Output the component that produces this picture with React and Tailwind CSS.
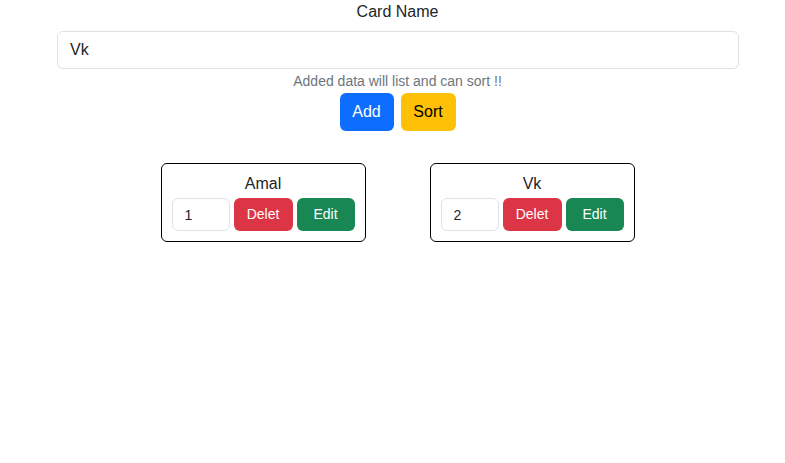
import { useState } from "react"

const CARDS = [
  { name: "Amal", num: "1" },
  { name: "Vk", num: "2" },
]

function Card({ name, num }) {
  return (
    <div className="w-[205px] h-[79px] border border-black rounded-[6px] pt-[8px] px-[10px] flex flex-col items-center">
      <p className="text-[16px] leading-[24px] text-[#212529]">{name}</p>
      <div className="mt-[2px] flex gap-[4px] w-full">
        <input
          defaultValue={num}
          className="w-[58px] h-[33px] border border-[#dee2e6] rounded-[6px] px-[12px] text-[14px] text-[#212529] outline-none"
        />
        <button className="w-[59px] h-[33px] rounded-[6px] bg-[#dc3545] text-white text-[14px]">Delet</button>
        <button className="w-[58px] h-[33px] rounded-[6px] bg-[#198754] text-white text-[14px]">Edit</button>
      </div>
    </div>
  )
}

export default function App() {
  const [value, setValue] = useState("Vk")

  return (
    <div className="w-[795px] bg-white min-h-[463px] font-['Liberation_Sans',Arial,sans-serif] text-[#212529]">
      <h5 className="text-center text-[16px] leading-[24px]">Card Name</h5>
      <div className="mx-[57px] mt-[7px]">
        <input
          value={value}
          onChange={(e) => setValue(e.target.value)}
          className="w-[682px] h-[38px] border border-[#dee2e6] rounded-[6px] px-[12px] text-[16px] text-[#212529] outline-none"
        />
      </div>
      <p className="text-center text-[14px] leading-[21px] text-[#6c757d] mt-[2px]">Added data will list and can sort !!</p>
      <div className="flex justify-center gap-[7px] mt-[1px]">
        <button className="w-[54px] h-[38px] rounded-[6px] bg-[#0d6efd] text-white text-[16px]">Add</button>
        <button className="w-[55px] h-[38px] rounded-[6px] bg-[#ffc107] text-black text-[16px]">Sort</button>
      </div>
      <div className="flex justify-center gap-[64px] mt-[32px]">
        {CARDS.map((c) => (
          <Card key={c.name} name={c.name} num={c.num} />
        ))}
      </div>
    </div>
  )
}
